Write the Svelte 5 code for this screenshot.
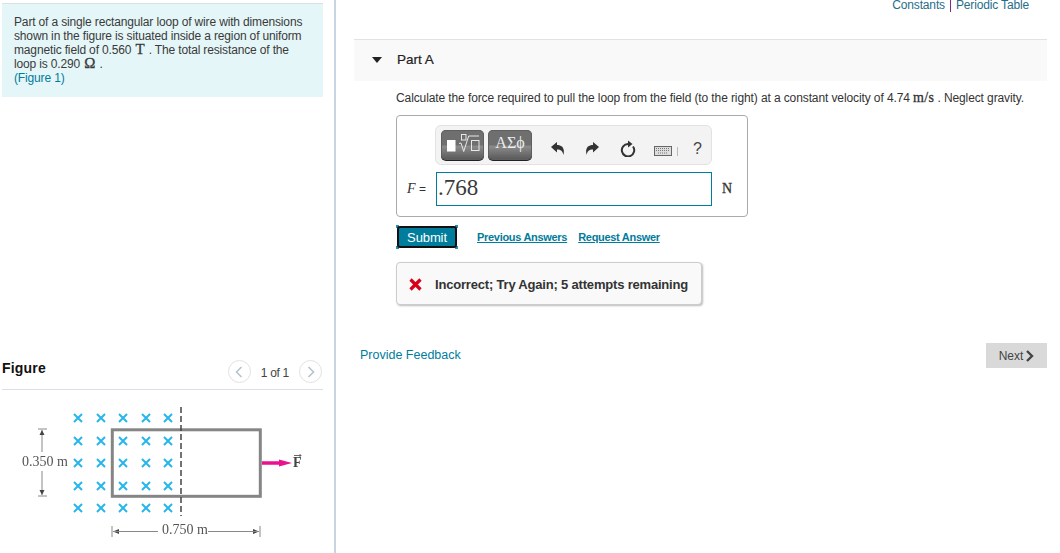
<script>
  const xCols = [78, 101, 123, 146, 168];
  const xRows = [418, 441, 463, 486, 508];
</script>

<div class="page">
  <aside class="left">
    <section class="intro">
      <p>Part of a single rectangular loop of wire with dimensions shown in the figure is situated inside a region of uniform magnetic field of 0.560 <b class="math">T</b> . The total resistance of the loop is 0.290 <b class="math">Ω</b> .</p>
      <a class="figlink" href="#f">(Figure 1)</a>
    </section>
    <header class="fighead">
      <h2>Figure</h2>
      <div class="pager">
        <span class="circle"><svg width="8" height="12" viewBox="0 0 8 12"><path d="M6.500 1 1.500 6l5 5" /></svg></span>
        <span class="count">1 of 1</span>
        <span class="circle"><svg width="8" height="12" viewBox="0 0 8 12"><path d="M1.500 1l5 5-5 5" /></svg></span>
      </div>
    </header>
    <svg class="figure" width="335" height="163" viewBox="0 390 335 163">
      <g class="crosses">
        {#each xRows as y}
          {#each xCols as x}
            <path d="M{x - 4} {y - 4}l8 8M{x + 4} {y - 4}l-8 8" />
          {/each}
        {/each}
      </g>
      <rect class="loop" x="112.300" y="429.800" width="148" height="66.500" />
      <path class="dash" d="M181 407V516" />
      <path class="dim" d="M38 429H47M38 496H47M42 430V452M42 471V495" />
      <path class="head" d="M42 430l-2.500 5h5zM42 495l-2.500-5h5zM113 531.500l6-2.500v5zM259 531.500l-6-2.500v5z" />
      <path class="dim" d="M112 526V537M260 526V537M113 531.500H158M208 531.500H259" />
      <path class="arrowline" d="M262 463H284" />
      <path class="arrowhead" d="M292 463l-13-3.500v7z" />
      <text class="serif" x="22" y="466">0.350 m</text>
      <text class="serif" x="162" y="534">0.750 m</text>
      <text class="fvec" x="293" y="467">F</text>
      <path class="vec" d="M294 455.500h7M299.500 454l1.500 1.500-1.500 1.500" />
    </svg>
  </aside>

  <main class="right">
    <nav class="toplinks"><a href="#c">Constants</a><i></i><a href="#p">Periodic Table</a></nav>

    <div class="parthead">
      <span class="tri"></span>
      <h3>Part A</h3>
    </div>

    <div class="body">
      <p class="q">Calculate the force required to pull the loop from the field (to the right) at a constant velocity of 4.74 <b class="math">m/s</b> . Neglect gravity.</p>

      <div class="editor">
        <div class="toolbar">
          <span class="tbtn tpl">
            <svg width="43" height="30" viewBox="0 0 43 30">
              <rect x="6" y="10" width="8.500" height="11.500" fill="#fff" />
              <rect x="20.500" y="4.500" width="4.500" height="5.500" fill="none" stroke="#e8e8e8" />
              <path d="M18 13.500l2-.5 2.700 8.500 5-15.500H38" fill="none" stroke="#e8e8e8" />
              <rect x="30.500" y="10.500" width="7.500" height="10" fill="none" stroke="#e8e8e8" />
            </svg>
          </span>
          <span class="tbtn sym">ΑΣϕ</span>
          <svg class="ic ic-undo" width="13" height="13" viewBox="0 0 13 13"><path d="M0 5 6 0v3c5 0 8 3 6.500 10C11.500 9 10 7.500 6 7.500V10.500z" fill="#333" /></svg>
          <svg class="ic ic-redo" width="13" height="13" viewBox="0 0 13 13"><path d="M13 5 7 0v3C2 3-1 6 .5 13 1.500 9 3 7.500 7 7.500V10.500z" fill="#333" /></svg>
          <svg class="ic ic-reset" width="16" height="17" viewBox="0 0 16 17"><path d="M13 6.500A6.200 6.200 0 1 1 8 4" fill="none" stroke="#333" stroke-width="2" /><path d="M8 .5v7L12.500 4z" fill="#333" /></svg>
          <svg class="ic ic-kb" width="18" height="10" viewBox="0 0 18 10"><rect x=".5" y=".5" width="17" height="9" fill="#ddd" stroke="#666" /><path d="M2 2.500h14M2 4.500h14M4 7h10" stroke="#777" stroke-dasharray="1 1" /></svg>
          <i class="tsep"></i>
          <span class="help">?</span>
        </div>
        <div class="answer">
          <span class="var"><em>F</em> <small>=</small></span>
          <div class="input">.768</div>
          <span class="unit">N</span>
        </div>
      </div>

      <div class="actions">
        <span class="focus"><button class="submit">Submit</button></span>
        <a href="#a">Previous Answers</a>
        <a href="#b">Request Answer</a>
      </div>

      <div class="feedback">
        <svg width="13" height="13" viewBox="0 0 13 13"><path d="M1.500 1.500l10 10M11.500 1.500l-10 10" stroke="#d9001b" stroke-width="3.200" /></svg>
        <span>Incorrect; Try Again; 5 attempts remaining</span>
      </div>
    </div>

    <div class="foot">
      <a href="#fb">Provide Feedback</a>
      <span class="next">Next <svg width="9" height="12" viewBox="0 0 9 12"><path d="M2 1l5 5-5 5" /></svg></span>
    </div>
  </main>
</div>

<style>
  :global(body) { margin: 0; background: #fff; }
  .page {
    display: flex;
    width: 1060px;
    height: 553px;
    overflow: hidden;
    font-family: "Liberation Sans", Arial, sans-serif;
    font-size: 12px;
    color: #333;
  }
  a { color: #007c9c; }
  p, h2, h3 { margin: 0; }
  .math { font-family: "Liberation Serif", serif; font-weight: bold; font-size: 14px; }

  .left {
    box-sizing: border-box;
    width: 336px;
    flex: none;
    border-right: 2px solid #c9d4e3;
    padding: 3px 11px 0 2px;
  }
  .intro {
    box-sizing: border-box;
    height: 94px;
    background: #e5f6f8;
    border-top: 1px solid #d9e2e8;
    padding: 11px 12px 0;
    line-height: 14px;
    color: #3a3a3a;
    letter-spacing: -.15px;
  }
  .intro .math { font-size: 15px; line-height: 12px; padding: 0 1px; font-weight: normal; -webkit-text-stroke: .3px #3a3a3a; }
  .figlink { display: block; text-decoration: none; }
  .fighead {
    box-sizing: border-box;
    height: 43px;
    margin-top: 250px;
    border-bottom: 1px solid #d9dfe6;
    display: flex;
    justify-content: space-between;
    align-items: flex-start;
  }
  .fighead h2 { font-size: 14px; font-weight: bold; color: #111; line-height: 16px; margin-top: 13px; letter-spacing: .2px; }
  .pager { display: flex; align-items: center; gap: 10px; margin-top: 13px; margin-right: 1px; }
  .circle {
    box-sizing: border-box;
    width: 23px;
    height: 23px;
    border: 1px solid #e2e2e2;
    border-radius: 50%;
    display: flex;
    align-items: center;
    justify-content: center;
  }
  .circle svg path { fill: none; stroke: #b8c2c8; stroke-width: 1.600; }
  .count { color: #444; letter-spacing: -.3px; padding-top: 2px; }
  .figure { display: block; margin-left: -2px; filter: blur(.35px); }
  .crosses path { stroke: #27b5ec; stroke-width: 2; fill: none; }
  .loop { fill: none; stroke: #858585; stroke-width: 3; }
  .dash { stroke: #444; stroke-width: 1.500; stroke-dasharray: 6 3; fill: none; }
  .dim { stroke: #888; stroke-width: 1; fill: none; }
  .head { fill: #444; }
  .arrowline { stroke: #e8128c; stroke-width: 3.500; fill: none; }
  .arrowhead { fill: #e8128c; }
  .serif { font-family: "Liberation Serif", serif; font-size: 14px; fill: #555; }
  .fvec { font-family: "Liberation Serif", serif; font-size: 14px; font-weight: bold; fill: #444; }
  .vec { stroke: #444; stroke-width: .8; fill: none; }

  .right { flex: 1; min-width: 0; padding: 0 13px 0 18px; }
  .toplinks {
    height: 39px;
    display: flex;
    justify-content: flex-end;
    padding-right: 18px;
    line-height: 10px;
    box-sizing: border-box;
    letter-spacing: -.15px;
  }
  .toplinks a { text-decoration: none; color: #1f6e8a; }
  .toplinks i { width: 1px; height: 12px; background: #7a2c82; margin: 0 5px; }
  .parthead {
    box-sizing: border-box;
    height: 42px;
    background: #f9f9f9;
    border-top: 1px solid #e2e2e2;
    display: flex;
    align-items: center;
    padding: 0 0 2px 18px;
  }
  .tri {
    width: 0; height: 0;
    border-left: 5px solid transparent;
    border-right: 5px solid transparent;
    border-top: 6px solid #222;
    margin-right: 15px;
  }
  .parthead h3 { font-size: 13.500px; font-weight: normal; -webkit-text-stroke: .2px #222; color: #222; }
  .body { padding: 9px 0 0 42px; }
  .q { line-height: 16px; font-size: 12px; color: #333; white-space: nowrap; letter-spacing: -.105px; }
  .q .math { letter-spacing: .3px; font-weight: normal; -webkit-text-stroke: .3px #333; }
  .editor {
    box-sizing: border-box;
    width: 352px;
    height: 102px;
    margin-top: 9px;
    border: 1px solid #aaa;
    border-radius: 4px;
    padding: 9px 0 0 38px;
    position: relative;
  }
  .toolbar {
    box-sizing: border-box;
    width: 277px;
    height: 40px;
    background: #f3f3f3;
    border: 1px solid #e2e2e2;
    border-radius: 6px;
    padding: 4px 5px;
    display: flex;
    align-items: flex-start;
  }
  .tbtn {
    box-sizing: border-box;
    height: 31px;
    border-radius: 5px;
    background: linear-gradient(#6f6f70 0, #6f6f70 50%, #8c8c8c 54%, #575757 100%);
    border-bottom: 1px solid #222;
    box-shadow: inset 0 0 0 1px #5f5f5f;
    color: #eee;
    display: flex;
    justify-content: center;
  }
  .tpl { width: 43px; overflow: hidden; }
  .sym { width: 44px; margin-left: 4px; font-family: "Liberation Serif", serif; font-size: 16px; line-height: 25px; }
  .ic { flex: none; }
  .ic-undo { margin: 12px 0 0 19px; }
  .ic-redo { margin: 12px 0 0 22px; }
  .ic-reset { margin: 10px 0 0 21px; }
  .ic-kb { margin: 16px 0 0 18px; }
  .tsep { width: 1px; height: 9px; background: #bbb; margin: 17px 0 0 5px; }
  .help { margin: 10px 0 0 15px; font-size: 16px; line-height: 18px; color: #444; }
  .answer { display: flex; align-items: center; margin-top: 7px; font-family: "Liberation Serif", serif; }
  .var { position: absolute; left: 10px; font-size: 14px; }
  .var small { font: 12px "Liberation Sans", sans-serif; }
  .input {
    box-sizing: border-box;
    width: 276px;
    height: 34px;
    border: 1px solid #007c9c;
    font-size: 23px;
    line-height: 30px;
    padding-left: 1px;
    color: #3a3a3a;
    margin-left: 1px;
  }
  .unit { position: absolute; left: 325px; font-size: 14px; -webkit-text-stroke: .3px #333; }
  .actions { display: flex; align-items: center; margin-top: 8px; height: 24px; font-size: 11px; }
  .actions a { font-weight: bold; margin-left: 11px; letter-spacing: -.3px; }
  .focus {
    display: block;
    padding: 1px;
    margin-right: 8px;
    background:
      linear-gradient(#2b8fad, #2b8fad) 0 0 / 3px 3px no-repeat,
      linear-gradient(#2b8fad, #2b8fad) 100% 0 / 3px 3px no-repeat,
      linear-gradient(#2b8fad, #2b8fad) 0 100% / 3px 3px no-repeat,
      linear-gradient(#2b8fad, #2b8fad) 100% 100% / 3px 3px no-repeat;
  }
  .submit {
    display: block;
    box-sizing: border-box;
    width: 60px;
    height: 22px;
    background: #007c9c;
    color: #fff;
    border: 2px solid #111;
    border-radius: 3px;
    font: 13px "Liberation Sans", sans-serif;
    letter-spacing: -.1px;
    padding: 0;
  }
  .feedback {
    box-sizing: border-box;
    width: 306px;
    height: 43px;
    margin-top: 13px;
    background: #f9f9f9;
    border: 1px solid #ccc;
    border-radius: 4px;
    box-shadow: 1px 1px 2px #bbb;
    display: flex;
    align-items: center;
    padding: 1px 0 0 12px;
    gap: 13px;
    font-weight: bold;
    font-size: 13px;
    letter-spacing: -.19px;
    color: #333;
  }
  .foot { display: flex; justify-content: space-between; align-items: center; margin-top: 38px; height: 25px; }
  .foot a { text-decoration: none; font-size: 12.500px; margin: 0 0 2px 6px; }
  .next {
    box-sizing: border-box;
    width: 61px;
    height: 25px;
    background: #d9d9d9;
    display: flex;
    align-items: center;
    justify-content: center;
    gap: 2px;
    color: #444;
  }
  .next path { fill: none; stroke: #444; stroke-width: 2.400; }
</style>
